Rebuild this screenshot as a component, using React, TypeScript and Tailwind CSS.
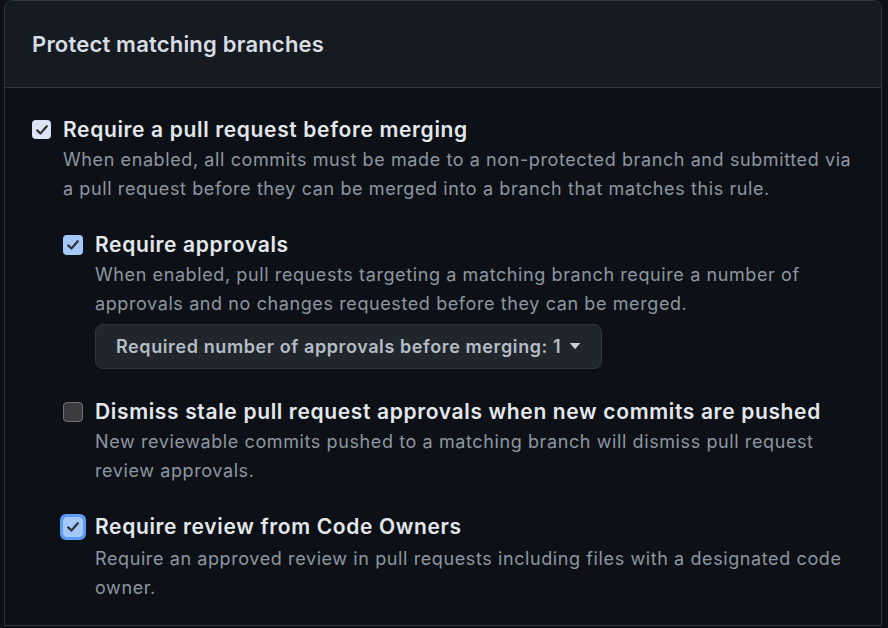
import type { ReactNode } from 'react';

type BoxKind = 'checked-light' | 'checked' | 'unchecked' | 'focused';

function Check({ kind }: { kind: BoxKind }) {
  const mark = (
    <svg viewBox="0 0 16 16" className="w-[14px] h-[14px]" fill="none">
      <path d="M2.5 8.5 L6.2 12 L13.5 3.8" stroke="#333436" strokeWidth="2.6" strokeLinecap="round" strokeLinejoin="round" />
    </svg>
  );
  if (kind === 'checked-light') {
    return (
      <span className="w-[19px] h-[19px] rounded-[4px] bg-[#dce5f6] flex items-center justify-center shrink-0">{mark}</span>
    );
  }
  if (kind === 'checked') {
    return (
      <span className="w-[20px] h-[20px] rounded-[4px] bg-[#a5c8fa] flex items-center justify-center shrink-0">{mark}</span>
    );
  }
  if (kind === 'focused') {
    return (
      <span className="w-[20px] h-[20px] rounded-[3px] bg-[#a5c8fa] flex items-center justify-center shrink-0 outline-[3px] outline-solid outline-[#5a9cf8]">{mark}</span>
    );
  }
  return <span className="w-[20px] h-[20px] rounded-[4px] bg-[#3b3c3e] border border-[#6e7073] shrink-0" />;
}

function Option({ kind, title, children, extra }: { kind: BoxKind; title: string; children: ReactNode; extra?: ReactNode }) {
  return (
    <div>
      <div className="flex items-center gap-3 h-[29px]">
        <Check kind={kind} />
        <span className="text-[21px] font-semibold tracking-[0.65px] text-[#e4e8ec] leading-[28px] whitespace-nowrap">{title}</span>
      </div>
      <div className={kind === 'checked-light' ? 'pl-[31px] pt-[1px]' : 'pl-[32px] pt-[1px]'}>
        <p className="text-[18px] leading-[29px] tracking-[0.6px] text-[#8d96a0]">{children}</p>
        {extra}
      </div>
    </div>
  );
}

export default function App() {
  return (
    <div className="w-[888px] h-[628px] bg-[#0d1117] overflow-hidden" style={{ fontFamily: 'Inter, "Noto Sans", sans-serif' }}>
      <div className="ml-[4px] w-[878px] h-[626px] border border-[#30363d] rounded-t-[8px] overflow-hidden flex flex-col">
        <div className="h-[87px] bg-[#161b22] border-b border-[#30363d] flex items-center pl-[27px]">
          <h2 className="text-[22px] font-semibold tracking-[0.2px] text-[#d8dde3]">Protect matching branches</h2>
        </div>
        <div className="flex-1 bg-[#0d1117] pt-[27px] pl-[27px] pr-[20px]">
          <Option kind="checked-light" title="Require a pull request before merging">
            When enabled, all commits must be made to a non-protected branch and submitted via a pull request before they can be merged into a branch that matches this rule.
          </Option>
          <div className="flex flex-col mt-[27px] pl-[31px]">
            <Option
              kind="checked"
              title="Require approvals"
              extra={
                <button className="mt-[6px] h-[45px] px-[20px] rounded-[8px] bg-[#21262d] border border-[#30363d] flex items-center gap-[8px] text-[18px] font-semibold tracking-[0.6px] text-[#b5bdc6]">
                  Required number of approvals before merging: 1
                  <svg viewBox="0 0 12 8" className="w-[12px] h-[7px]"><path d="M0 0 H12 L6 7 Z" fill="#c9d1d9" /></svg>
                </button>
              }
            >
              When enabled, pull requests targeting a matching branch require a number of approvals and no changes requested before they can be merged.
            </Option>
            <div className="mt-[28px]">
              <Option kind="unchecked" title="Dismiss stale pull request approvals when new commits are pushed">
                New reviewable commits pushed to a matching branch will dismiss pull request review approvals.
              </Option>
            </div>
            <div className="mt-[27px]">
              <Option kind="focused" title="Require review from Code Owners">
                <span className="block pt-[2px]">Require an approved review in pull requests including files with a designated code owner.</span>
              </Option>
            </div>
          </div>
        </div>
      </div>
    </div>
  );
}
